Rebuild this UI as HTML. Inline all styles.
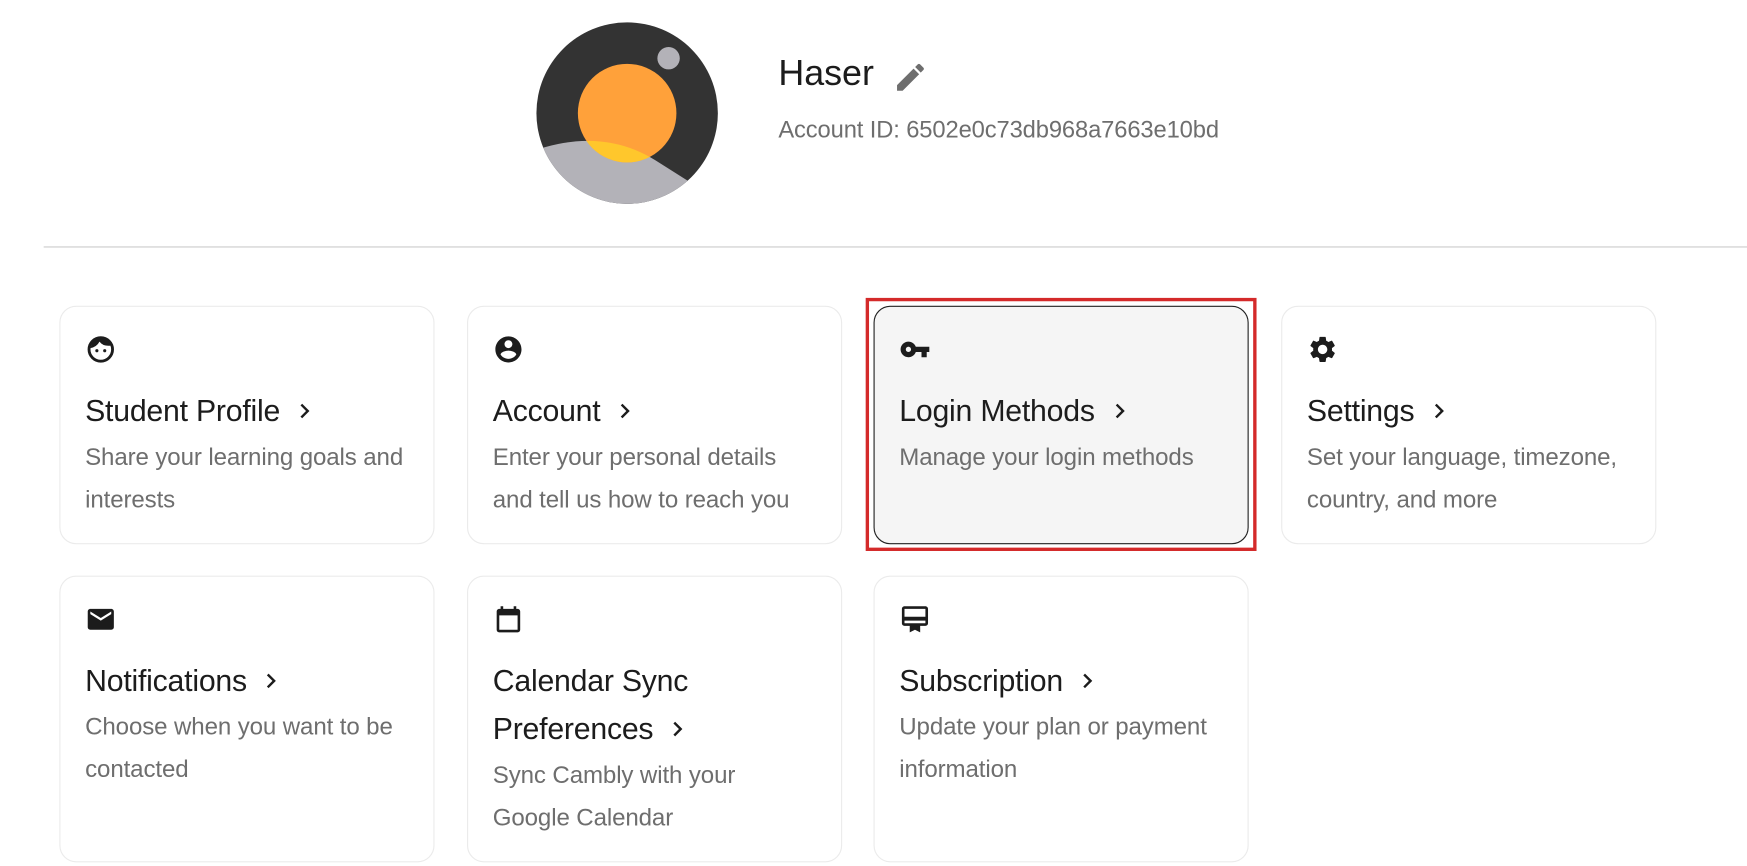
<!DOCTYPE html>
<html><head><meta charset="utf-8"><style>
html,body{margin:0;padding:0;background:#fff;overflow:hidden;width:1747px;height:866px}
#w{position:absolute;left:0;top:0;width:1560px;height:773px;transform:scale(1.1199);transform-origin:0 0;font-family:"Liberation Sans",Arial,sans-serif}
.card{position:absolute;width:335px;border:1px solid #ebebeb;border-radius:15px;box-sizing:border-box;padding:24px 24px 0 22px;background:#fff}
.card svg.ic{display:block;width:28px;height:28px}
.t{margin-top:19.5px;font-size:27px;line-height:43px;color:#1c1c1c;letter-spacing:-0.2px}
.t svg{width:26px;height:26px;vertical-align:-4px;margin-left:9px}
.d{font-size:21.5px;line-height:38px;color:#6e6e6e;letter-spacing:-0.1px}
.sel{background:#f5f5f5;border:1px solid #222}
</style></head><body><div id="w">
<svg style="position:absolute;left:0;top:0" width="1560" height="230">
<defs><clipPath id="cc"><circle cx="560" cy="101" r="81"/></clipPath>
<clipPath id="gc"><path d="M470 137 Q535 112 585 143 L615 162 L660 210 L470 210Z"/></clipPath></defs>
<circle cx="560" cy="101" r="81" fill="#333"/>
<g clip-path="url(#cc)"><path d="M470 137 Q535 112 585 143 L615 162 L660 210 L470 210Z" fill="#b3b2b8"/></g>
<circle cx="560" cy="101" r="44" fill="#ffa13a"/>
<circle cx="560" cy="101" r="44" fill="#ffc72c" clip-path="url(#gc)"/>
<circle cx="597" cy="52" r="10" fill="#b3b2b8"/>
<line x1="39" y1="220.5" x2="1560" y2="220.5" stroke="#dcdcdc" stroke-width="1.5"/>
</svg>
<div style="position:absolute;left:695px;top:47px;font-size:32px;color:#1c1c1c">Haser</div>
<svg style="position:absolute;left:797px;top:53px" width="32" height="32" viewBox="0 0 24 24"><path fill="#6e6e6e" d="M3 17.25V21h3.75L17.81 9.94l-3.75-3.75L3 17.25zM20.71 7.04c.39-.39.39-1.02 0-1.41l-2.34-2.34c-.39-.39-1.02-.39-1.41 0l-1.83 1.83 3.75 3.75 1.83-1.83z"/></svg>
<div style="position:absolute;left:695px;top:105px;font-size:21.2px;color:#6e6e6e;letter-spacing:-0.1px">Account ID: 6502e0c73db968a7663e10bd</div>

<div style="position:absolute;left:773px;top:266px;width:343px;height:220px;border:3.5px solid #d42a2a;"></div>

<div class="card" style="left:53px;top:273px;height:213px">
<svg class="ic" viewBox="0 0 24 24"><circle cx="12" cy="12" r="9" fill="none" stroke="#1c1c1c" stroke-width="2.2"/><path d="M4 11 Q6 3 12 3 Q18 3 20 9 Q14 10 11 6 Q9 10 4 11Z" fill="#1c1c1c"/><circle cx="9" cy="13" r="1.2" fill="#1c1c1c"/><circle cx="15" cy="13" r="1.2" fill="#1c1c1c"/></svg>
<div class="t">Student Profile<svg viewBox="0 0 24 24"><path fill="#1c1c1c" d="M8.59 16.59L13.17 12 8.59 7.41 10 6l6 6-6 6z"/></svg></div>
<div class="d">Share your learning goals and interests</div></div>

<div class="card" style="left:417px;top:273px;height:213px">
<svg class="ic" viewBox="0 0 24 24"><path fill="#1c1c1c" d="M12 2C6.48 2 2 6.48 2 12s4.48 10 10 10 10-4.48 10-10S17.52 2 12 2zm0 3c1.66 0 3 1.34 3 3s-1.34 3-3 3-3-1.34-3-3 1.34-3 3-3zm0 14.2c-2.5 0-4.71-1.28-6-3.22.03-1.99 4-3.08 6-3.08 1.99 0 5.970 1.09 6 3.08-1.29 1.94-3.5 3.22-6 3.22z"/></svg>
<div class="t">Account<svg viewBox="0 0 24 24"><path fill="#1c1c1c" d="M8.59 16.59L13.17 12 8.59 7.41 10 6l6 6-6 6z"/></svg></div>
<div class="d">Enter your personal details and tell us how to reach you</div></div>

<div class="card sel" style="left:780px;top:273px;height:213px">
<svg class="ic" viewBox="0 0 24 24"><path fill="#1c1c1c" d="M12.65 10C11.83 7.67 9.61 6 7 6c-3.31 0-6 2.69-6 6s2.69 6 6 6c2.61 0 4.83-1.67 5.65-4H17v4h4v-4h2v-4H12.65zM7 14c-1.1 0-2-.9-2-2s.9-2 2-2 2 .9 2 2-.9 2-2 2z"/></svg>
<div class="t">Login Methods<svg viewBox="0 0 24 24"><path fill="#1c1c1c" d="M8.59 16.59L13.17 12 8.59 7.41 10 6l6 6-6 6z"/></svg></div>
<div class="d">Manage your login methods</div></div>

<div class="card" style="left:1144px;top:273px;height:213px">
<svg class="ic" viewBox="0 0 24 24"><path fill="#1c1c1c" d="M19.14 12.94c.04-.3.06-.61.06-.94 0-.32-.02-.64-.07-.94l2.03-1.58c.18-.14.23-.41.12-.61l-1.92-3.32c-.12-.22-.37-.29-.59-.22l-2.39.96c-.5-.38-1.03-.7-1.62-.94l-.36-2.54c-.04-.24-.24-.41-.48-.41h-3.84c-.24 0-.43.17-.47.41l-.36 2.54c-.59.24-1.13.57-1.62.94l-2.39-.96c-.22-.08-.47 0-.59.22L2.74 8.87c-.12.21-.08.47.12.61l2.03 1.58c-.05.3-.09.63-.09.94s.02.64.07.94l-2.03 1.58c-.18.14-.23.41-.12.61l1.92 3.32c.12.22.37.29.59.22l2.39-.96c.5.38 1.03.7 1.62.94l.36 2.54c.05.24.24.41.48.41h3.84c.24 0 .44-.17.47-.41l.36-2.54c.59-.24 1.13-.56 1.62-.94l2.39.96c.22.08.47 0 .59-.22l1.92-3.32c.12-.22.07-.47-.12-.61l-2.01-1.58zM12 15.6c-1.98 0-3.6-1.62-3.6-3.6s1.62-3.6 3.6-3.6 3.6 1.62 3.6 3.6-1.62 3.6-3.6 3.6z"/></svg>
<div class="t">Settings<svg viewBox="0 0 24 24"><path fill="#1c1c1c" d="M8.59 16.59L13.17 12 8.59 7.41 10 6l6 6-6 6z"/></svg></div>
<div class="d">Set your language, timezone, country, and more</div></div>

<div class="card" style="left:53px;top:514px;height:256px">
<svg class="ic" viewBox="0 0 24 24"><path fill="#1c1c1c" d="M20 4H4c-1.1 0-1.99.9-1.99 2L2 18c0 1.1.9 2 2 2h16c1.1 0 2-.9 2-2V6c0-1.1-.9-2-2-2zm0 4l-8 5-8-5V6l8 5 8-5v2z"/></svg>
<div class="t">Notifications<svg viewBox="0 0 24 24"><path fill="#1c1c1c" d="M8.59 16.59L13.17 12 8.59 7.41 10 6l6 6-6 6z"/></svg></div>
<div class="d">Choose when you want to be contacted</div></div>

<div class="card" style="left:417px;top:514px;height:256px">
<svg class="ic" viewBox="0 0 24 24"><path fill="#1c1c1c" d="M19 4h-1V2h-2v2H8V2H6v2H5c-1.1 0-2 .9-2 2v14c0 1.1.9 2 2 2h14c1.1 0 2-.9 2-2V6c0-1.1-.9-2-2-2zm0 16H5V9h14v11z"/></svg>
<div class="t">Calendar Sync Preferences<svg viewBox="0 0 24 24"><path fill="#1c1c1c" d="M8.59 16.59L13.17 12 8.59 7.41 10 6l6 6-6 6z"/></svg></div>
<div class="d">Sync Cambly with your<br>Google Calendar</div></div>

<div class="card" style="left:780px;top:514px;height:256px">
<svg class="ic" viewBox="0 0 24 24"><path fill="#1c1c1c" d="M20 2H4c-1.11 0-2 .89-2 2v11c0 1.11.89 2 2 2h4v5l4-2 4 2v-5h4c1.11 0 2-.89 2-2V4c0-1.11-.89-2-2-2zm0 13H4v-2h16v2zm0-5H4V4h16v6z"/></svg>
<div class="t">Subscription<svg viewBox="0 0 24 24"><path fill="#1c1c1c" d="M8.59 16.59L13.17 12 8.59 7.41 10 6l6 6-6 6z"/></svg></div>
<div class="d">Update your plan or payment information</div></div>
</div></body></html>
